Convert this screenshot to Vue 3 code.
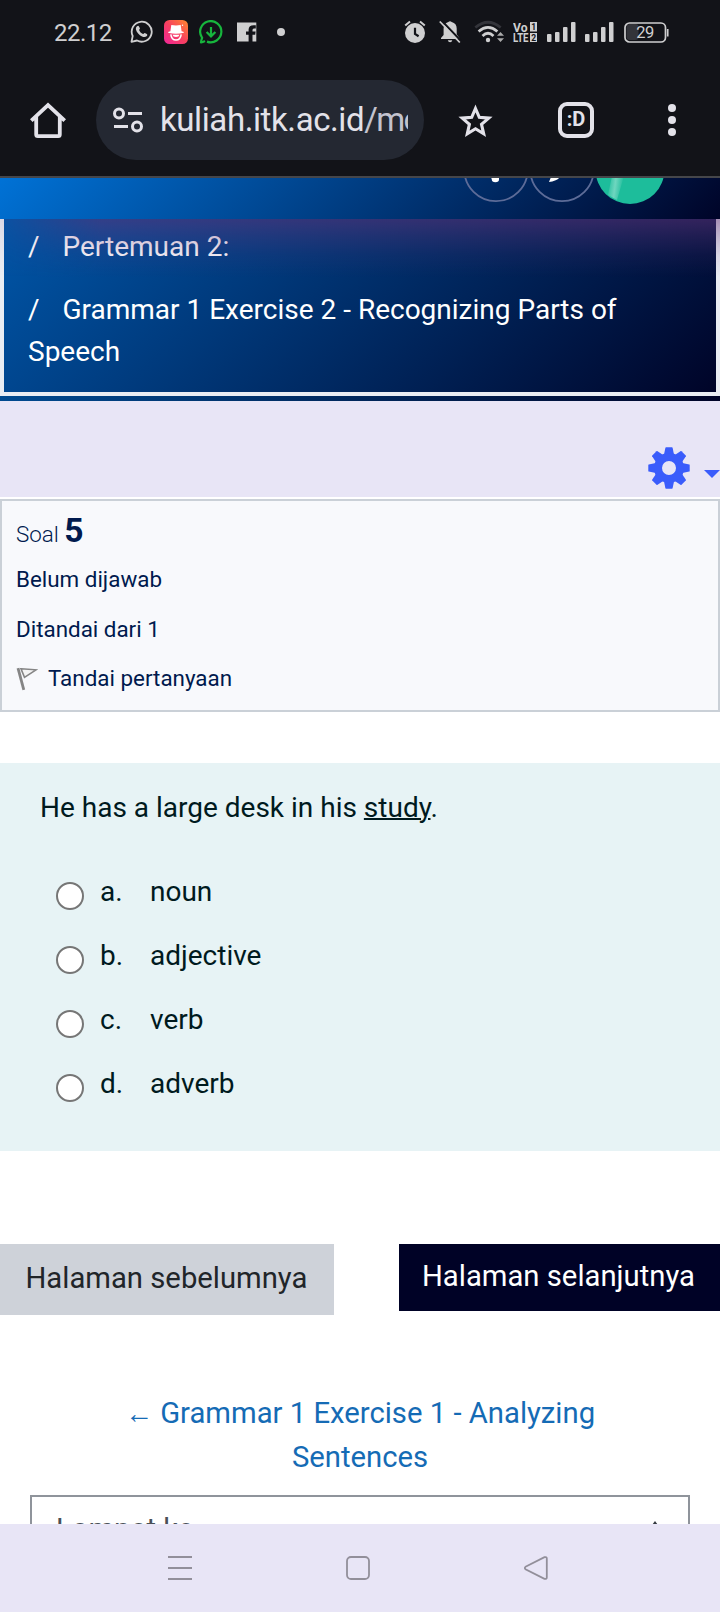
<script setup>
const options = [
  { key: 'a.', label: 'noun' },
  { key: 'b.', label: 'adjective' },
  { key: 'c.', label: 'verb' },
  { key: 'd.', label: 'adverb' },
]
const teeth = [0, 45, 90, 135, 180, 225, 270, 315]
</script>

<template>
  <div class="screen">
    <header class="status">
      <span class="time">22.12</span>
      <svg class="i-wa" width="24" height="24" viewBox="0 0 24 24">
        <path d="M1.500 21.800 2.700 16A10 10 0 1 1 7 20.500Z" fill="none" stroke="#cfcfd0" stroke-width="1.800" stroke-linejoin="round" />
        <path d="M7 6.300c.8-.8 1.600-.7 2 .1l.9 1.900c.2.5-.7 1.300-.8 1.700.7 1.900 2 3.200 3.900 4 .6-.1 1.200-1.300 1.800-1.100l2 1c.8.500.6 1.600-.2 2.300-1.200 1.100-2.800 1-4.600.2-2.900-1.300-5.300-4.100-6-6.700-.3-1.400 0-2.500 1-3.400Z" fill="#cfcfd0" />
      </svg>
      <svg class="i-hat" width="24" height="24" viewBox="0 0 24 24">
        <defs>
          <linearGradient id="hat" x1="0" y1="1" x2="1" y2="0">
            <stop offset="0" stop-color="#f0269a" />
            <stop offset=".5" stop-color="#f7405f" />
            <stop offset="1" stop-color="#ff8a2c" />
          </linearGradient>
        </defs>
        <rect width="24" height="24" rx="5.500" fill="url(#hat)" />
        <path d="M7.300 5 12 5.600 16.700 5 17.600 11.300Q20 11.800 20 12.700 12 14.600 4 12.700 4 11.800 6.400 11.300Z" fill="#fff" />
        <path d="M6.800 14.300Q7.500 20 12 20T17.200 14.300" fill="none" stroke="#fff" stroke-width="1.500" />
        <path d="M8.500 14.800h7q-.5 2.200-3.500 2.200t-3.500-2.200Z" fill="#fff" />
        <circle cx="18.500" cy="5.200" r=".7" fill="#fff" />
      </svg>
      <svg class="i-dl" width="24" height="24" viewBox="0 0 24 24">
        <path d="M8 21.600A10.600 10.600 0 1 0 3.100 17.800Q1.800 21.700 2 22.300 3.500 22.400 6 21" fill="none" stroke="#17b63d" stroke-width="2.200" />
        <path d="M12 7v9M7.600 12 12 16.400 16.400 12" fill="none" stroke="#17b63d" stroke-width="2.200" />
      </svg>
      <svg class="i-fb" width="20" height="20" viewBox="0 0 20 20">
        <path d="M0 .5h19.300v19H15.500v-6.700h2.700l.4-3.300H15.500V8q0-1.600 1.400-1.600h1.900V3.300Q11.700 2.400 11.600 7.500v2H9v3.300h2.600v6.700H0Z" fill="#cfcfd0" />
      </svg>
      <i class="dot"></i>

      <svg class="i-alarm" width="22" height="24" viewBox="0 0 22 24">
        <circle cx="11" cy="13" r="10" fill="#cfcfd0" />
        <path d="M1.200 5.600 6 1.600M20.800 5.600 16 1.600" stroke="#cfcfd0" stroke-width="2" />
        <path d="M11 7.800V14l3.600 2.300" fill="none" stroke="#121318" stroke-width="2.200" />
      </svg>
      <svg class="i-bell" width="23" height="24" viewBox="0 0 23 24">
        <path d="M9.300 2q1.700-1.600 3.400 0 5 1.400 5 6.500v5.700L20.300 18v1H2v-1l2.600-3V8.500Q4.600 3.300 9.300 2ZM8.800 20.300h4.500q-.4 1.900-2.200 1.900t-2.300-1.900Z" fill="#cfcfd0" />
        <path d="M2.500.5 22.500 21.500" stroke="#121318" stroke-width="2" />
        <path d="M.8 1.500 20.800 22.500" stroke="#cfcfd0" stroke-width="1.800" />
      </svg>
      <svg class="i-wifi" width="31" height="24" viewBox="0 0 31 24">
        <g fill="none" stroke-width="2.700">
          <path d="M1.300 7.500Q14 -3 26.700 7.500" stroke="#33343a" />
          <path d="M4.600 11.500Q14 3.300 23.400 11.500" stroke="#cfcfd0" />
          <path d="M8.500 16Q14 10.600 19.500 16" stroke="#cfcfd0" />
        </g>
        <circle cx="14" cy="20" r="2.200" fill="#cfcfd0" />
        <path d="M23 15.800 26.500 12 30 15.800ZM23 18.300 26.500 22 30 18.300Z" fill="#aaa" />
      </svg>
      <svg class="i-lte" width="24" height="24" viewBox="0 0 24 24">
        <rect x="17" y="2" width="7" height="9.500" fill="#cfcfd0" />
        <rect x="17" y="13" width="7" height="9" fill="#cfcfd0" />
        <g font-family="Roboto, sans-serif" font-weight="700" fill="#cfcfd0" letter-spacing="0">
          <text x="0" y="11.500" font-size="13.500" textLength="14.500" lengthAdjust="spacingAndGlyphs">Vo</text>
          <text x="0" y="22" font-size="12.500" textLength="15.500" lengthAdjust="spacingAndGlyphs">LTE</text>
          <text x="18.200" y="9.800" font-size="8.500" fill="#121318">1</text>
          <text x="18.200" y="20.600" font-size="8.500" fill="#121318">2</text>
        </g>
      </svg>
      <svg v-for="n in 2" :key="n" class="i-sig" width="29" height="24" viewBox="0 0 29 24">
        <g fill="#cfcfd0">
          <rect y="14" width="4.500" height="8" rx="1" />
          <rect x="8" y="12" width="4.500" height="10" rx="1" />
          <rect x="16" y="7" width="4.500" height="15" rx="1" />
          <rect x="24" y="2" width="4.500" height="20" rx="1" />
        </g>
      </svg>
      <svg class="i-bat" width="46" height="24" viewBox="0 0 46 24">
        <rect x="2.500" y="4" width="12" height="16" rx="3" fill="#33343a" />
        <rect x="1" y="3" width="40.500" height="19" rx="4.500" fill="none" stroke="#cfcfd0" stroke-width="1.700" />
        <path d="M43.700 9v7.500" stroke="#cfcfd0" stroke-width="1.700" />
        <text x="12.200" y="18.300" font-family="Roboto, sans-serif" font-size="16.500" letter-spacing="-.5" fill="#cfcfd0">29</text>
      </svg>
    </header>

    <nav class="toolbar">
      <svg class="home" width="36" height="36" viewBox="0 0 36 36">
        <path d="M1.300 18.600 18 3 34.700 18.600M6.200 15V32.500Q6.200 34.100 7.800 34.100H28.200Q29.800 34.100 29.800 32.500V15" fill="none" stroke="#e3e2e9" stroke-width="3.800" stroke-linejoin="miter" />
      </svg>
      <div class="pill">
        <svg width="30" height="26" viewBox="0 0 30 26">
          <g fill="none" stroke="#e3e2e9" stroke-width="3">
            <circle cx="6" cy="6.500" r="4.500" />
            <circle cx="24" cy="19.500" r="4.500" />
            <path d="M15 6.500H29M1 19.500H15" />
          </g>
        </svg>
        <div class="url">kuliah.itk.ac.id<span>/mod</span></div>
      </div>
      <svg class="star" width="36" height="36" viewBox="0 0 36 36">
        <path d="M17.500 6.500 21.300 15.300 30.800 16.100 23.500 22.400 25.700 31.800 17.500 26.800 9.300 31.800 11.400 22.400 4.200 16.100 13.700 15.300Z" fill="none" stroke="#e3e2e9" stroke-width="3.100" />
      </svg>
      <div class="tabs">:D</div>
      <svg class="more" width="8" height="32" viewBox="0 0 8 32">
        <g fill="#e3e2e9"><circle cx="4" cy="4" r="4" /><circle cx="4" cy="16" r="4" /><circle cx="4" cy="28" r="4" /></g>
      </svg>
    </nav>

    <div class="masthead">
      <svg width="720" height="41" viewBox="0 178 720 41">
        <defs>
          <linearGradient id="shine" x1="0" x2="1" y1="0" y2=".2">
            <stop offset="0" stop-color="#6fd6bf" stop-opacity="0" />
            <stop offset=".5" stop-color="#6fd6bf" />
            <stop offset="1" stop-color="#6fd6bf" stop-opacity="0" />
          </linearGradient>
        </defs>
        <g fill="none" stroke="#5d6c98" stroke-width="1.800">
          <circle cx="496" cy="169.500" r="31.700" />
          <circle cx="562" cy="169.500" r="31.700" />
        </g>
        <circle cx="630" cy="169.500" r="34.500" fill="#1dbd9b" />
        <path d="M612 176h12l-7 24-9-5Z" fill="url(#shine)" />
        <path d="M491 177h8v2.500a3.600 2.700 0 0 1-7.200 0Z" fill="#fff" />
        <path d="M551 177h9q-3 4-11 5Z" fill="#fff" />
      </svg>
    </div>

    <section class="crumb-wrap">
      <ol class="crumbs">
        <li>Pertemuan 2:</li>
        <li>Grammar 1 Exercise 2 - Recognizing Parts of Speech</li>
      </ol>
    </section>

    <div class="settings">
      <svg class="gear" width="42" height="42" viewBox="-21 -21 42 42">
        <g fill="#3a5cfb">
          <path v-for="t in teeth" :key="t" d="M-3.600-20.300Q-3.500-20.700-3-20.700H3Q3.500-20.700 3.600-20.300L5.300-12H-5.300Z" :transform="`rotate(${t})`" />
        </g>
        <circle r="11" fill="none" stroke="#3a5cfb" stroke-width="8" />
      </svg>
      <svg class="caret" width="16" height="8" viewBox="0 0 16 8"><path d="M0 0h16L8 8Z" fill="#3a5cfb" /></svg>
    </div>

    <section class="info">
      <h3><span>Soal</span> 5</h3>
      <p>Belum dijawab</p>
      <p>Ditandai dari 1</p>
      <p class="flag">
        <svg width="22" height="24" viewBox="0 0 22 24">
          <path d="M2 1.200 7.800 22.800" stroke="#858585" stroke-width="2.800" />
          <path d="M5 1.800 20 2.800 8.500 10.300Z" fill="#f4f4f4" stroke="#858585" stroke-width="1.600" />
        </svg>
        Tandai pertanyaan
      </p>
    </section>

    <section class="question">
      <p class="prompt">He has a large desk in his <u>study</u>.</p>
      <label v-for="o in options" :key="o.key" class="option">
        <i class="radio"></i><span class="key">{{ o.key }}</span><span>{{ o.label }}</span>
      </label>
    </section>

    <div class="pager">
      <button class="prev">Halaman sebelumnya</button>
      <button class="next">Halaman selanjutnya</button>
    </div>

    <a class="back"><span class="arrow">←</span> Grammar 1 Exercise 1 - Analyzing<br />Sentences</a>

    <div class="jump-clip">
      <div class="jump">
        <span>Lompat ke...</span>
        <svg width="14" height="26" viewBox="0 0 14 26"><path d="M7 0 13 8H1ZM7 26 13 18H1Z" fill="#343a40" /></svg>
      </div>
    </div>

    <footer class="sysnav">
      <svg width="24" height="26" viewBox="0 0 24 26"><path d="M0 2h24M0 13h24M0 24h24" stroke="#928f9a" stroke-width="2" /></svg>
      <svg width="24" height="24" viewBox="0 0 24 24"><rect x="1" y="1" width="22" height="22" rx="4" fill="none" stroke="#928f9a" stroke-width="1.800" /></svg>
      <svg width="24" height="24" viewBox="0 0 24 24"><path d="M1.500 10.800 20.500 1.200Q22.800.6 22.800 2.500V21.500Q22.800 23.400 20.500 22.800L1.500 13.200Q.2 12 1.500 10.800Z" fill="none" stroke="#928f9a" stroke-width="1.800" /></svg>
    </footer>
  </div>
</template>

<style>
body { margin: 0; background: #fff; }
</style>

<style scoped>
* { box-sizing: border-box; }
svg { display: block; flex: none; }
p, h3, ol { margin: 0; padding: 0; }
.screen { width: 720px; height: 1612px; overflow: hidden; display: flex; flex-direction: column; background: #fff; font-family: Roboto, "Liberation Sans", sans-serif; }
.screen > * { flex: none; }

.status { height: 64px; background: #121318; display: flex; align-items: center; padding: 0 50px 0 54px; color: #cfcfd0; }
.time { width: 76px; font-size: 24px; line-height: 30px; letter-spacing: -.5px; padding-top: 2px; }
.i-hat { margin-left: 10px; }
.i-dl { margin-left: 11px; }
.i-fb { margin-left: 14px; }
.dot { width: 8px; height: 8px; border-radius: 50%; background: #cfcfd0; margin-left: 20px; }
.i-alarm { margin-left: auto; }
.i-bell { margin-left: 13px; }
.i-wifi { margin-left: 12px; }
.i-lte { margin-left: 8px; }
.i-sig { margin-left: 10px; }
.i-sig + .i-sig { margin-left: 9px; }
.i-bat { margin-left: 10px; }

.toolbar { height: 114px; background: #121318; border-bottom: 2px solid #45464a; display: flex; align-items: center; padding-left: 30px; }
.pill { margin-left: 30px; width: 328px; height: 80px; border-radius: 40px; background: #242832; display: flex; align-items: center; padding-left: 17px; }
.url { margin-left: 17px; width: 248px; overflow: hidden; white-space: nowrap; font-size: 33px; line-height: 44px; letter-spacing: -.4px; color: #e3e2e9; }
.url span { color: #c3c3ce; letter-spacing: -1.600px; }
.star { margin-left: 34px; }
.tabs { margin-left: 64px; width: 36px; height: 36px; border: 4px solid #e3e2e9; border-radius: 9px; color: #e3e2e9; font-weight: 700; font-size: 20px; line-height: 27px; text-align: center; }
.more { margin-left: 74px; }

.masthead { height: 41px; background: linear-gradient(135deg, #0072d6, #000428); }
.crumb-wrap { position: relative; height: 182px; padding: 0 4px 9px; background: linear-gradient(90deg, #004a90, #000428) bottom / 100% 5px no-repeat #e9edf3; }
.crumb-wrap::before { content: ""; position: absolute; inset: 0 0 auto; height: 58px; background: linear-gradient(180deg, rgba(102, 50, 120, .5), rgba(102, 50, 120, .3) 30%, rgba(102, 50, 120, .12) 62%, rgba(102, 50, 120, 0)); mask-image: linear-gradient(90deg, rgba(0, 0, 0, .2), #000 100px); }
.crumbs { list-style: none; height: 173px; padding: 7px 24px 0; background: linear-gradient(135deg, #0056a8, #000428); color: #fff; font-size: 28px; line-height: 42px; }
.crumbs li + li { margin-top: 21px; }
.crumbs li::before { content: "/"; display: inline-block; width: 34.500px; }

.settings { height: 96px; background: #e8e5f6; display: flex; align-items: flex-start; padding: 46px 0 0 648px; }
.caret { margin: 23px 0 0 14px; }

.info { margin-top: 2px; height: 213px; border: 2px solid #cad0d7; background: #f8f9fc; padding: 12px 14px 0; color: #001a4e; font-size: 22.400px; line-height: 33.600px; }
.info h3 { font-size: 33.600px; font-weight: 700; line-height: 36px; height: 50px; }
.info h3 span { font-size: 22.400px; font-weight: 300; margin-right: -3px; }
.info p + p { margin-top: 16px; }
.flag { display: flex; align-items: center; gap: 10px; }

.question { margin-top: 51px; height: 388px; background: #e7f3f5; padding: 24px 40px 0; color: #001a1e; font-size: 28px; line-height: 42px; }
.prompt { margin-bottom: 42px; }
.prompt u { text-decoration-thickness: 2px; }
.option { display: flex; height: 42px; margin-bottom: 22px; padding-left: 16px; }
.radio { width: 28px; height: 28px; margin: 11px 16px 0 0; border: 2px solid #767676; border-radius: 50%; background: #fff; }
.key { width: 50px; }

.pager { margin-top: 93px; height: 71px; display: flex; justify-content: space-between; align-items: flex-start; }
.pager button { border: 0; border-radius: 0; padding: 0; font: 29.250px/44px Roboto, sans-serif; text-align: left; white-space: nowrap; }
.pager .prev { width: 334px; height: 71px; padding: 0 0 3px 25.500px; background: #ced2d9; color: #212529; }
.pager .next { width: 321px; height: 67px; padding: 0 0 3px 23px; background: #000226; color: #fff; }

.back { margin-top: 76px; height: 104px; text-align: center; color: #156bb5; font-size: 29.250px; line-height: 44px; }
.arrow { font-family: "Liberation Sans", sans-serif; font-size: 28px; line-height: 0; }
.jump-clip { height: 29px; overflow: hidden; padding: 0 30px; }
.jump { height: 72px; border: 2px solid #8f949b; padding: 0 26px 0 24px; display: flex; align-items: center; justify-content: space-between; color: #495057; font-size: 29.250px; }
.jump span { margin-bottom: 5px; }
.jump svg { margin-top: 6px; }
.sysnav { height: 88px; background: #e8e5f6; display: flex; align-items: center; padding-left: 168px; gap: 154px; }
</style>
